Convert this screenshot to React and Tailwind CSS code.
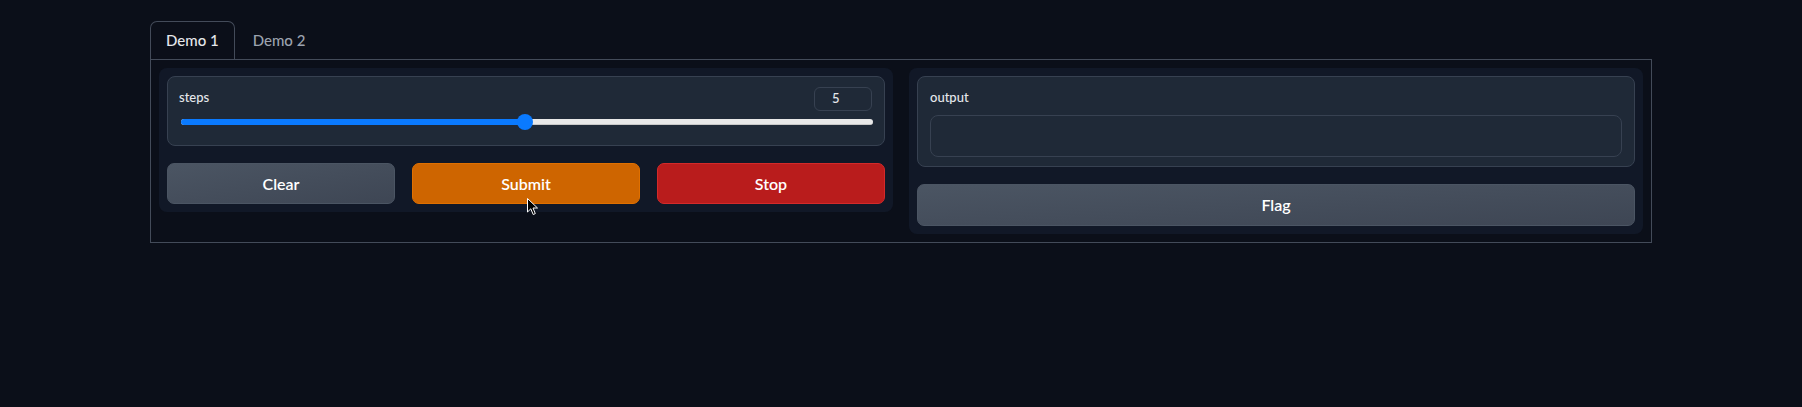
import { useState } from 'react'

const font = { fontFamily: 'Lato, "Noto Sans", sans-serif' }

const secondaryBtn =
  'flex h-[41px] flex-1 items-center justify-center rounded-[7px] border border-[#4b5563] bg-gradient-to-br from-[#4b5563] to-[#3e4654] text-[16px] font-semibold text-white'

function Cursor() {
  return (
    <svg
      className="pointer-events-none absolute left-[527px] top-[198px]"
      width="12"
      height="18"
      viewBox="0 0 12 18"
    >
      <path
        d="M0.5 0.5 L0.5 14 L3.8 10.8 L6.2 16.5 L8.3 15.6 L6 10 L10.5 10 Z"
        fill="#000"
        stroke="#fff"
        strokeWidth="1"
        strokeLinejoin="round"
      />
    </svg>
  )
}

function StepsBlock() {
  const [value] = useState(5)
  const pct = (value / 10) * 100

  return (
    <div className="rounded-lg border border-[#374151] bg-[#1f2937] px-[11px] pb-[15px] pt-[10px]">
      <div className="flex h-[24px] items-start justify-between">
        <span className="text-[13px] font-medium leading-[20px] text-[#e5e7eb]">
          steps
        </span>
        <div className="mr-[1px] flex h-[24px] w-[58px] items-center rounded-md border border-[#374151] bg-[#1f2937] pl-[17px] text-[13px] font-medium text-[#e5e7eb]">
          {value}
        </div>
      </div>
      <div className="relative mt-[3px] h-[16px] pl-[2px]">
        <div className="absolute left-[2px] right-0 top-[5px] h-[6px] rounded-full border-b border-[#c8c8c8] bg-[#e8e8e8]" />
        <div
          className="absolute left-[2px] top-[5px] h-[6px] rounded-full bg-[#0a7aff]"
          style={{ width: `${pct}%` }}
        />
        <div
          className="absolute top-0 h-[16px] w-[16px] -translate-x-1/2 rounded-full bg-[#0a7aff]"
          style={{ left: `calc(${pct}% - 1px)` }}
        />
      </div>
    </div>
  )
}

function OutputBlock() {
  return (
    <div className="rounded-lg border border-[#374151] bg-[#1f2937] px-[12px] pb-[9px] pt-[10px]">
      <div className="text-[13px] font-medium leading-[20px] text-[#e5e7eb]">
        output
      </div>
      <div className="mt-[8px] h-[42px] rounded-lg border border-[#374151] bg-[#1f2937]" />
    </div>
  )
}

export default function App() {
  return (
    <div className="relative min-h-[407px] bg-[#0b0f19] px-[150px] pt-[21px]" style={font}>
      <div className="flex">
        <button className="relative z-10 -mb-px h-[38px] rounded-t-[7px] border border-b-0 border-[#434b59] bg-[#0b0f19] px-[15px] text-[15px] font-medium text-[#e5e7eb]">
          Demo 1
        </button>
        <button className="h-[38px] px-[18px] text-[15px] font-medium text-[#9ca3af]">
          Demo 2
        </button>
      </div>

      <div className="flex items-start gap-4 border border-[#434b59] p-2">
        <div className="flex flex-1 flex-col gap-[17px] rounded-lg bg-[#111827] p-2">
          <StepsBlock />
          <div className="flex gap-[17px]">
            <button className={secondaryBtn}>Clear</button>
            <button className="flex h-[41px] flex-1 items-center justify-center rounded-[7px] border border-[#e07000] bg-[#ce6500] text-[16px] font-semibold text-white">
              Submit
            </button>
            <button className="flex h-[41px] flex-1 items-center justify-center rounded-[7px] border border-[#d42a2a] bg-[#b91c1c] text-[16px] font-semibold text-white">
              Stop
            </button>
          </div>
        </div>

        <div className="flex flex-1 flex-col gap-[17px] rounded-lg bg-[#111827] p-2">
          <OutputBlock />
          <button className={`${secondaryBtn} h-[42px] flex-none`}>Flag</button>
        </div>
      </div>

      <Cursor />
    </div>
  )
}
